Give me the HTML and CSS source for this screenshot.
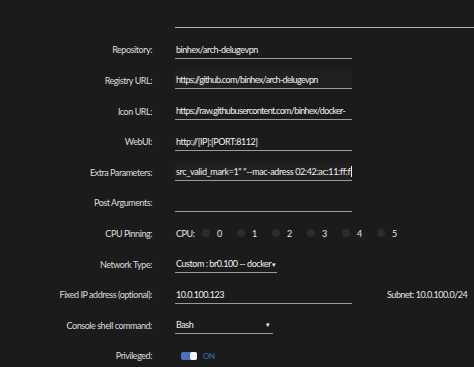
FILE: index.html
```html
<!DOCTYPE html>
<html>
<head>
    <meta charset="UTF-8">
    <title>docker edit</title>
    <link rel="stylesheet" href="styles.css">
</head>
<body>
    <div class="form">
        <div class="row">
            <div class="label"></div>
            <div class="field wide"></div>
        </div>
        <div class="row">
            <div class="label">Repository:</div>
            <div class="field">binhex/arch-delugevpn</div>
        </div>
        <div class="row">
            <div class="label">Registry URL:</div>
            <div class="field shade url">https://github.com/binhex/arch-delugevpn</div>
        </div>
        <div class="row">
            <div class="label">Icon URL:</div>
            <div class="field url">https://raw.githubusercontent.com/binhex/docker-</div>
        </div>
        <div class="row">
            <div class="label">WebUI:</div>
            <div class="field">http://[IP]:[PORT:8112]</div>
        </div>
        <div class="row">
            <div class="label">Extra Parameters:</div>
            <div class="field shade scrolled"><span>src_valid_mark=1" "--mac-adress 02:42:ac:11:ff:ff</span><i class="caret"></i></div>
        </div>
        <div class="row">
            <div class="label">Post Arguments:</div>
            <div class="field"></div>
        </div>
        <div class="row">
            <div class="label">CPU Pinning:</div>
            <div class="cpus">
                <span class="cpu-title">CPU:</span>
                <span class="cpu"><i class="dot"></i>0</span>
                <span class="cpu"><i class="dot"></i>1</span>
                <span class="cpu"><i class="dot"></i>2</span>
                <span class="cpu"><i class="dot"></i>3</span>
                <span class="cpu"><i class="dot"></i>4</span>
                <span class="cpu"><i class="dot"></i>5</span>
            </div>
        </div>
        <div class="row">
            <div class="label">Network Type:</div>
            <div class="field select">Custom : br0.100 -- docker<span class="arrow">&#9662;</span></div>
        </div>
        <div class="row">
            <div class="label">Fixed IP address (optional):</div>
            <div class="field">10.0.100.123</div>
            <div class="note">Subnet: 10.0.100.0/24</div>
        </div>
        <div class="row">
            <div class="label">Console shell command:</div>
            <div class="field select spread">Bash<span class="arrow">&#9662;</span></div>
        </div>
        <div class="row">
            <div class="label">Privileged:</div>
            <div class="switch">
                <span class="track"><span class="knob"></span></span>
                <span class="on">ON</span>
            </div>
        </div>
    </div>
</body>
</html>
```

FILE: styles.css
```css
/* page */
body{
    margin: 0;
    background-color: #1c1b1c;
    color: #e6e6e6;
    font-family: Lato, "Liberation Sans", Arial, sans-serif;
    font-size: 9px;
    letter-spacing: -0.45px;
    overflow: hidden;
}

.form{
    padding-top: 4px;
}

.row{
    display: grid;
    grid-template-columns: 152px 177px auto;
    column-gap: 23px;
    align-items: center;
    height: 30.6px;
}

.label{
    text-align: right;
    color: #dedede;
    white-space: nowrap;
}

/* inputs */
.field{
    height: 17px;
    line-height: 17px;
    padding-left: 1px;
    border-bottom: 1px solid #9b9b9b;
    color: #f2f2f2;
    white-space: nowrap;
    overflow: hidden;
}

/* urls are set a bit tighter */
.field.url{
    letter-spacing: -0.65px;
}

.field.wide{
    width: 300px;
    border-bottom-color: #b0b0b0;
}

.field.shade{
    background-color: #211f20;
}

.scrolled{
    display: flex;
    justify-content: flex-end;
    align-items: center;
    letter-spacing: -0.36px;
}

.caret{
    display: inline-block;
    flex: none;
    width: 1px;
    height: 11px;
    margin-left: -2px;
    background-color: #f0f0f0;
}

.field.select{
    justify-self: start;
    min-width: 98px;
    padding-right: 1px;
}

.field.spread{
    display: flex;
    justify-content: space-between;
    padding-right: 3px;
    width: 94px;
    min-width: 0;
}

.arrow{
    font-size: 7px;
    margin-left: 1px;
}

.note{
    padding-left: 12px;
    color: #e6e6e6;
    white-space: nowrap;
}

/* cpu pinning */
.cpus{
    display: flex;
    align-items: center;
    grid-column: 2 / 4;
    padding-left: 1px;
}

.cpu-title{
    width: 26px;
}

.cpu{
    display: flex;
    align-items: center;
    width: 35px;
}

.dot{
    display: inline-block;
    width: 8px;
    height: 8px;
    border-radius: 50%;
    background-color: #2d2b2c;
    margin-right: 7px;
}

/* toggle */
.switch{
    display: flex;
    align-items: center;
    padding-left: 6px;
}

.track{
    display: flex;
    justify-content: flex-end;
    width: 16px;
    height: 8px;
    border-radius: 2px;
    background-color: #4a6fc4;
}

.knob{
    width: 7px;
    height: 8px;
    border-radius: 2px;
    background-color: #f4f4f4;
}

.on{
    margin-left: 6px;
    font-size: 8px;
    color: #3c6eb4;
}
```
